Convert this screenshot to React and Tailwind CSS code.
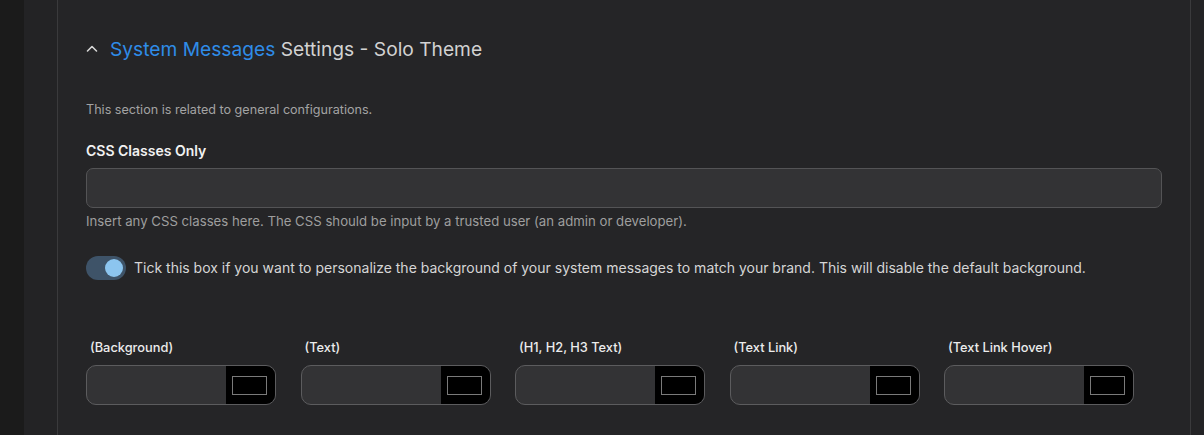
import React from "react";

function ColorField({ label }) {
  return (
    <div className="flex flex-col w-[190px]">
      <div className="h-[16px] pl-[4px] text-[12.8px] leading-[16px] font-medium text-[#ececec]">{label}</div>
      <div className="mt-[9px] flex h-[40px] rounded-[10px] border border-[#5c5c5e] overflow-hidden bg-[#333335]">
        <div className="flex-1" />
        <div className="w-[49px] bg-black flex items-center justify-center pr-[2px]">
          <div className="w-[35px] h-[19px] border border-[#7a7a7a] bg-black" />
        </div>
      </div>
    </div>
  );
}

export default function App() {
  return (
    <div
      className="w-[1204px] h-[435px] flex bg-[#232325] overflow-hidden"
      style={{ fontFamily: "Inter, 'Noto Sans', sans-serif" }}
    >
      <div className="w-[24px] h-full bg-[#1b1b1b]" />
      <div className="w-[33px] h-full bg-[#232325]" />
      <div className="w-[1134px] h-full border-l border-r border-[#3a3a3c] bg-[#252527] pl-[28px] pr-[28px]">
        <div className="mt-[35px] h-[28px] flex items-center">
          <svg width="12" height="12" viewBox="0 0 12 12">
            <path d="M1.5 8 L6 3.5 L10.5 8" fill="none" stroke="#d6d6d6" strokeWidth="1.6" strokeLinecap="round" strokeLinejoin="round" />
          </svg>
          <div className="ml-[12px] text-[19.2px] leading-[28px] text-[#d2d2d2]">
            <span className="text-[#2f8ce8]">System Messages</span> Settings - Solo Theme
          </div>
        </div>
        <div className="mt-[39px] text-[12.6px] leading-[16px] text-[#a3a3a3]">
          This section is related to general configurations.
        </div>
        <div className="mt-[23px] text-[14px] leading-[20px] font-semibold text-[#f2f2f2]">CSS Classes Only</div>
        <div className="mt-[7px] h-[40px] w-[1076px] rounded-[7px] border border-[#545456] bg-[#333335]" />
        <div className="mt-[5px] text-[13.2px] leading-[16px] text-[#9e9e9e]">
          Insert any CSS classes here. The CSS should be input by a trusted user (an admin or developer).
        </div>
        <div className="mt-[27px] h-[24px] flex items-center">
          <div className="w-[40px] h-[24px] rounded-full bg-[#3e5368] flex items-center justify-end pr-[3px]">
            <div className="w-[18px] h-[18px] rounded-full bg-[#8cc5ef]" />
          </div>
          <div className="ml-[8px] text-[14px] leading-[20px] text-[#d6d6d6]">
            Tick this box if you want to personalize the background of your system messages to match your brand. This will disable the default background.
          </div>
        </div>
        <div className="mt-[60px] flex gap-[24.5px]">
          <ColorField label="(Background)" />
          <ColorField label="(Text)" />
          <ColorField label="(H1, H2, H3 Text)" />
          <ColorField label="(Text Link)" />
          <ColorField label="(Text Link Hover)" />
        </div>
      </div>
      <div className="flex-1 h-full bg-[#232325]" />
    </div>
  );
}
